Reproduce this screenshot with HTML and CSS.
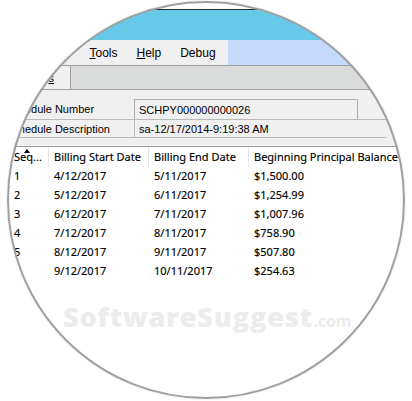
FILE: index.html
```html
<!DOCTYPE html>
<html>
<head>
<meta charset="utf-8">
<link rel="stylesheet" href="styles.css">
</head>
<body>
<div class="stage">
  <div class="app">
    <div class="titlebar"></div>
    <div class="menubar">
      <div class="menu-left">
        <span class="mi"><u>T</u>ools</span>
        <span class="mi"><u>H</u>elp</span>
        <span class="mi">Debu<u>g</u></span>
      </div>
      <div class="menu-right"></div>
    </div>
    <div class="tabstrip">
      <div class="tab"><span class="tab-label">Schedule<u>s</u></span></div>
      <div class="tab-rest"></div>
    </div>
    <div class="form">
      <div class="frow r1">
        <div class="flabel">Schedule Number</div>
        <div class="fbox">SCHPY000000000026</div>
      </div>
      <div class="frow r2">
        <div class="flabel">Schedule Description</div>
        <div class="fval">sa-12/17/2014-9:19:38 AM</div>
      </div>
    </div>
    <div class="grid">
      <div class="grow ghead">
        <div class="gc sep seq">Seq...<span class="sort"></span></div>
        <div class="gc sep">Billing Start Date</div>
        <div class="gc sep">Billing End Date</div>
        <div class="gc">Beginning Principal Balance</div>
      </div>
      <div class="grow"><div class="gc">1</div><div class="gc">4/12/2017</div><div class="gc">5/11/2017</div><div class="gc">$1,500.00</div></div>
      <div class="grow"><div class="gc">2</div><div class="gc">5/12/2017</div><div class="gc">6/11/2017</div><div class="gc">$1,254.99</div></div>
      <div class="grow"><div class="gc">3</div><div class="gc">6/12/2017</div><div class="gc">7/11/2017</div><div class="gc">$1,007.96</div></div>
      <div class="grow"><div class="gc">4</div><div class="gc">7/12/2017</div><div class="gc">8/11/2017</div><div class="gc">$758.90</div></div>
      <div class="grow"><div class="gc">5</div><div class="gc">8/12/2017</div><div class="gc">9/11/2017</div><div class="gc">$507.80</div></div>
      <div class="grow"><div class="gc">6</div><div class="gc">9/12/2017</div><div class="gc">10/11/2017</div><div class="gc">$254.63</div></div>
    </div>
  </div>
  <div class="ring"></div>
  <div class="watermark">SoftwareSuggest<span class="dotcom">.com</span></div>
</div>
</body>
</html>
```
FILE: styles.css
```css
html, body {
  margin: 0;
  padding: 0;
  background: #ffffff;
}

.stage {
  position: relative;
  width: 412px;
  height: 401px;
  overflow: hidden;
  background: #ffffff;
}

.app {
  box-sizing: border-box;
  width: 412px;
  height: 401px;
  padding-top: 9px;
  background: #ffffff;
  clip-path: circle(198px at 206px 199.5px);
}

.titlebar {
  height: 30px;
  border-top: 1px solid #2a2a2a;
  background: #66c9e9;
}

.menubar {
  display: flex;
  height: 25px;
  background: #f0f0f0;
  border-bottom: 1px solid #a0a0a0;
}

.menu-left {
  box-sizing: border-box;
  width: 228px;
  display: flex;
  align-items: center;
  padding-left: 80px;
  font: 12px "Liberation Sans", Arial, sans-serif;
  color: #000;
}

.mi {
  padding: 0 9.5px;
}

.menu-right {
  flex: 1;
  background: #c4d9fc;
}

.tabstrip {
  display: flex;
  height: 23px;
  border-bottom: 1px solid #a0a0a0;
}

.tab {
  box-sizing: border-box;
  width: 71px;
  background: #f0f0f0;
  border-right: 1px solid #a0a0a0;
  display: flex;
  align-items: center;
  justify-content: flex-end;
  padding-right: 16px;
  font: 11px "Liberation Sans", Arial, sans-serif;
  color: #000;
}

.tab-rest {
  flex: 1;
  background: #dadbdb;
}

.form {
  box-sizing: border-box;
  height: 56px;
  padding-top: 9px;
  background: #f0f0f0;
  font: 11px "Liberation Sans", Arial, sans-serif;
  color: #000;
}

.frow {
  box-sizing: border-box;
  width: 386px;
  display: flex;
  border-bottom: 1px solid #b9b9b9;
}

.r1 {
  height: 21px;
}

.r2 {
  height: 18px;
}

.flabel {
  width: 134px;
  padding-left: 6px;
  box-sizing: border-box;
  display: flex;
  align-items: center;
}

.fbox {
  box-sizing: border-box;
  width: 224px;
  border: 1px solid #adadad;
  border-bottom: none;
  padding-left: 4px;
  display: flex;
  align-items: center;
}

.fval {
  flex: 1;
  border-left: 1px solid #b9b9b9;
  padding-left: 4px;
  display: flex;
  align-items: center;
}

.grid {
  border-top: 1px solid #a0a0a0;
  background: #ffffff;
  padding-left: 8px;
  font: 11px "Noto Sans", "Open Sans", sans-serif;
  color: #000;
  -webkit-text-stroke: 0.15px #000;
}

.grow {
  display: grid;
  grid-template-columns: 41px 100px 100px 1fr;
  height: 19px;
  line-height: 20px;
}

.gc {
  white-space: nowrap;
  padding-left: 5px;
  border-right: 1px solid transparent;
}

.grow > .gc:first-child {
  padding-left: 6px;
}

.ghead .sep {
  border-right: 1px solid #e5e5e5;
}

.seq {
  position: relative;
}

.sort {
  position: absolute;
  left: 16px;
  top: 2px;
  width: 0;
  height: 0;
  border-left: 3px solid transparent;
  border-right: 3px solid transparent;
  border-bottom: 4px solid #000;
}

.ring {
  position: absolute;
  left: 7px;
  top: 1px;
  width: 398px;
  height: 398px;
  box-sizing: border-box;
  border: 2px solid #a0a0a0;
  border-radius: 50%;
  box-shadow: 0 0 2px rgba(0, 0, 0, 0.15);
}

.watermark {
  position: absolute;
  left: 63px;
  top: 298px;
  font: 800 27px "Open Sans", sans-serif;
  color: #ececec;
  letter-spacing: 0.9px;
  white-space: nowrap;
}

.dotcom {
  font-size: 16px;
  font-weight: 700;
  letter-spacing: 0;
}
```
